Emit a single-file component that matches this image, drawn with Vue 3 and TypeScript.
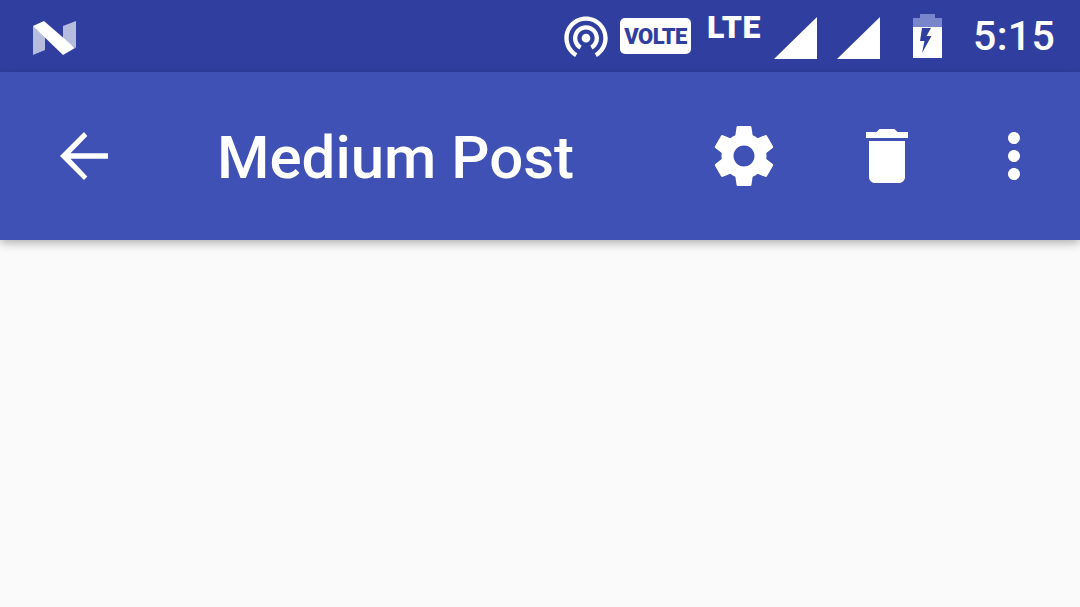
<template>
  <div class="screen">
    <div class="status-bar">
      <svg class="n-logo" viewBox="0 0 45 36" width="45" height="36">
        <polygon points="1,7 13,14 13,31 1,36" fill="#fff" opacity="0.65" />
        <polygon points="31,7 44,2 44,29 31,21" fill="#fff" opacity="0.65" />
        <polygon points="1,7 12,2 43,29 31,36" fill="#fff" />
      </svg>
      <svg class="hotspot" viewBox="0 0 24 24" width="52" height="52">
        <path
          fill="#fff"
          d="M12 11c-1.1 0-2 .9-2 2s.9 2 2 2 2-.9 2-2-.9-2-2-2zm6 2c0-3.31-2.69-6-6-6s-6 2.69-6 6c0 2.22 1.21 4.15 3 5.19l1-1.74c-1.19-.7-2-1.97-2-3.45 0-2.21 1.79-4 4-4s4 1.79 4 4c0 1.48-.81 2.75-2 3.45l1 1.74c1.79-1.04 3-2.97 3-5.19zM12 3C6.48 3 2 7.48 2 13c0 3.7 2.01 6.92 4.99 8.65l1-1.73C5.61 18.53 4 15.96 4 13c0-4.42 3.58-8 8-8s8 3.58 8 8c0 2.96-1.61 5.53-4 6.92l1 1.73c2.99-1.73 5-4.95 5-8.65 0-5.52-4.48-10-10-10z"
        />
      </svg>
      <span class="volte">VOLTE</span>
      <span class="lte">LTE</span>
      <svg class="signal" viewBox="0 0 43 42" width="43" height="42">
        <polygon points="0,42 43,0 43,42" fill="#fff" />
      </svg>
      <svg class="signal second" viewBox="0 0 43 42" width="43" height="42">
        <polygon points="0,42 43,0 43,42" fill="#fff" />
      </svg>
      <svg class="battery" viewBox="0 0 29 44" width="29" height="44">
        <path d="M7 0h15v4h7v9H0V4h7z" fill="#7986cb" />
        <rect y="13" width="29" height="31" fill="#fff" />
        <polygon points="9,14 7,27 11.5,27 9,39 18.5,22 13.5,22 18,14" fill="#303f9f" />
      </svg>
      <span class="clock">5:15</span>
    </div>

    <div class="toolbar">
      <svg class="back" viewBox="0 0 24 24" width="72" height="72">
        <path fill="#fff" d="M20 11.1H7.5l5.6-5.8L12 4l-8 8 8 8 1.1-1.2-5.6-5.9H20z" />
      </svg>
      <span class="title">{{ title }}</span>
      <svg class="gear" viewBox="0 0 24 24" width="72" height="72">
        <path
          fill="#fff"
          d="M19.43 12.98c.04-.32.07-.64.07-.98s-.03-.66-.07-.98l2.11-1.65c.19-.15.24-.42.12-.64l-2-3.46c-.12-.22-.39-.3-.61-.22l-2.49 1c-.52-.4-1.08-.73-1.69-.98l-.38-2.65C14.46 2.18 14.25 2 14 2h-4c-.25 0-.46.18-.49.42l-.38 2.65c-.61.25-1.17.59-1.69.98l-2.49-1c-.23-.09-.49 0-.61.22l-2 3.46c-.13.22-.07.49.12.64l2.11 1.65c-.04.32-.07.65-.07.98s.03.66.07.98l-2.11 1.65c-.19.15-.24.42-.12.64l2 3.46c.12.22.39.3.61.22l2.49-1c.52.4 1.08.73 1.69.98l.38 2.65c.03.24.24.42.49.42h4c.25 0 .46-.18.49-.42l.38-2.65c.61-.25 1.17-.59 1.69-.98l2.49 1c.23.09.49 0 .61-.22l2-3.46c.12-.22.07-.49-.12-.64l-2.11-1.65zM12 15.5c-1.93 0-3.5-1.57-3.5-3.5s1.57-3.5 3.5-3.5 3.5 1.57 3.5 3.5-1.57 3.5-3.5 3.5z"
        />
      </svg>
      <svg class="trash" viewBox="0 0 24 24" width="72" height="72">
        <path fill="#fff" d="M6 19c0 1.1.9 2 2 2h8c1.1 0 2-.9 2-2V7H6v12zM19 4h-3.5l-1-1h-5l-1 1H5v2h14V4z" />
      </svg>
      <svg class="more" viewBox="0 0 24 24" width="72" height="72">
        <path
          fill="#fff"
          d="M12 8c1.1 0 2-.9 2-2s-.9-2-2-2-2 .9-2 2 .9 2 2 2zm0 2c-1.1 0-2 .9-2 2s.9 2 2 2 2-.9 2-2-.9-2-2-2zm0 6c-1.1 0-2 .9-2 2s.9 2 2 2 2-.9 2-2-.9-2-2-2z"
        />
      </svg>
    </div>

    <div class="content"></div>
  </div>
</template>

<script setup lang="ts">
const title = "Medium Post";
</script>

<style>
html,
body {
  margin: 0;
  background: #fafafa;
}
</style>

<style scoped>
.screen {
  width: 1080px;
  height: 607px;
  display: flex;
  flex-direction: column;
  overflow: hidden;
  font-family: Roboto, "Liberation Sans", sans-serif;
  background: #fafafa;
}

.status-bar {
  height: 72px;
  flex: none;
  display: flex;
  align-items: center;
  padding-left: 32px;
  background: #303f9f;
  color: #fff;
}

.n-logo {
  flex: none;
  margin-top: 2px;
}

.hotspot {
  flex: none;
  margin-left: auto;
}

.volte {
  width: 71px;
  height: 36px;
  margin-left: 8px;
  border-radius: 5px;
  background: #fff;
  color: #303f9f;
  font-size: 22px;
  font-weight: 900;
  line-height: 37px;
  text-align: center;
  letter-spacing: -0.6px;
}

.lte {
  margin-left: 16px;
  margin-bottom: 18px;
  font-size: 32px;
  font-weight: 900;
  line-height: 36px;
  letter-spacing: 0.6px;
}

.signal {
  flex: none;
  margin-left: 13px;
  margin-top: 4px;
}

.signal.second {
  margin-left: 20px;
}

.battery {
  flex: none;
  margin-left: 33px;
}

.clock {
  margin-left: 31px;
  margin-right: 25px;
  font-size: 41px;
  font-weight: 500;
  line-height: 72px;
  letter-spacing: 0.3px;
}

.toolbar {
  height: 168px;
  flex: none;
  display: flex;
  align-items: center;
  padding: 0 30px 0 48px;
  background: #3f51b5;
  color: #fff;
  box-shadow: 0 3px 9px rgba(0, 0, 0, 0.3);
  position: relative;
}

.toolbar svg {
  flex: none;
}

.title {
  margin-left: 97px;
  margin-top: 4px;
  font-size: 60px;
  font-weight: 500;
  line-height: 72px;
}

.gear {
  margin-left: auto;
}

.trash {
  margin-left: 71px;
}

.more {
  margin-left: 55px;
}

.content {
  flex: 1;
}
</style>
